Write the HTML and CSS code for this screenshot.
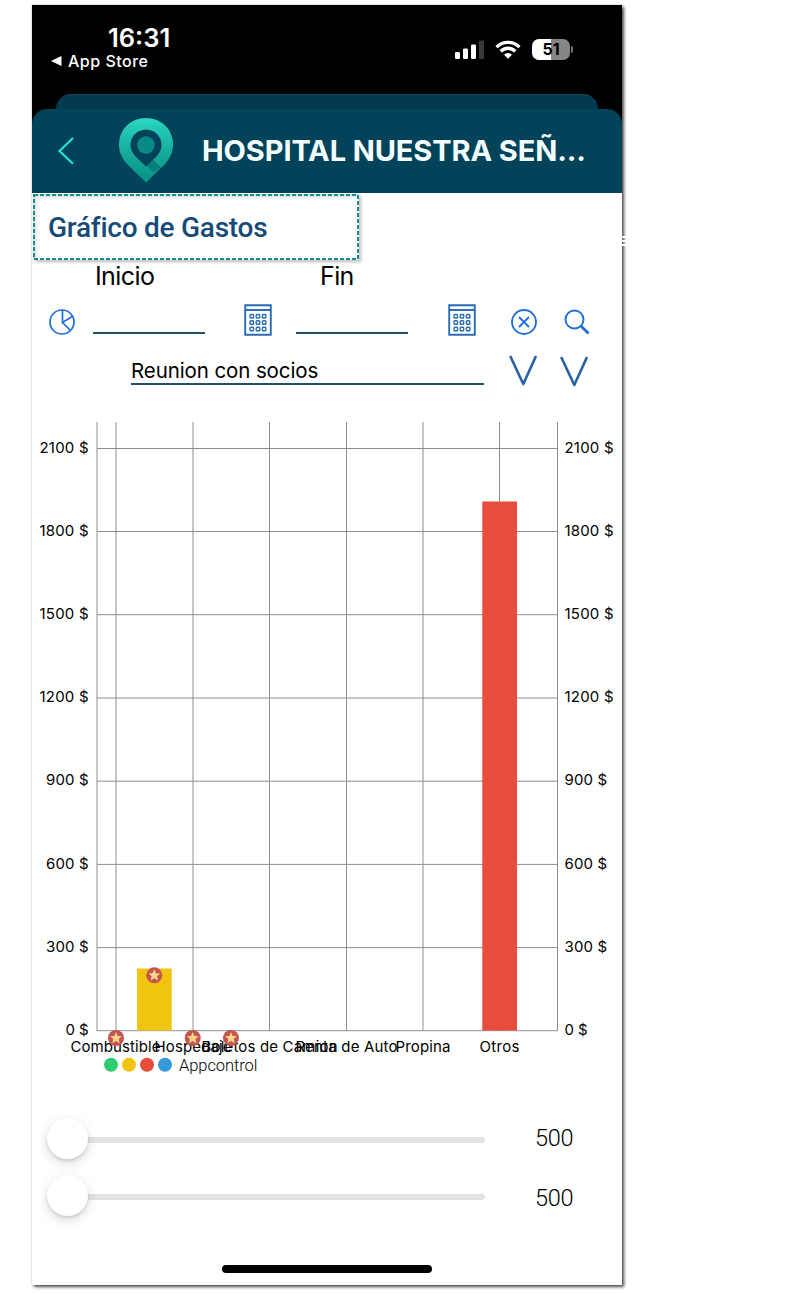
FILE: index.html
```html
<!DOCTYPE html>
<html lang="es">
<head>
<meta charset="utf-8">
<title>Gráfico de Gastos</title>
<link rel="stylesheet" href="styles.css">
</head>
<body>
<main class="phone">
  <div class="edge-menu"><i></i><i></i><i></i></div>
  <header class="top">
    <div class="status">
      <div class="clock">
        <div class="time">16:31</div>
        <div class="back-app"><svg width="11" height="10" viewBox="0 0 11 10"><path d="M0 5 10.5 0V10Z" fill="#fff"/></svg><span>App Store</span></div>
      </div>
      <div class="indicators">
        <svg class="signal" width="29" height="19" viewBox="0 0 29 19"><g fill="#fff"><rect x="0" y="12" width="5" height="7" rx="1.3"/><rect x="8" y="8.500" width="5" height="10.500" rx="1.3"/><rect x="16" y="4.500" width="5" height="14.500" rx="1.3"/></g><rect x="24" y="0.500" width="5" height="18.500" rx="1.3" fill="#3a3a3a"/></svg>
        <svg class="wifi" width="26" height="19" viewBox="0 0 26 19" fill="none" stroke="#fff" stroke-width="3.300"><path d="M1.500 7.100a16.300 16.300 0 0 1 23 0"/><path d="M5.700 11.300a10.300 10.300 0 0 1 14.600 0"/><path d="M9 14.700a5.700 5.700 0 0 1 8 0L13 18.700Z" fill="#fff" stroke="none"/></svg>
        <div class="battery">51</div><i class="battery-tip"></i>
      </div>
    </div>
    <div class="sheet-behind"></div>
    <div class="navbar">
      <svg class="back" width="17" height="28" viewBox="0 0 17 28"><path d="M16 1 2.500 14 16 26.800" fill="none" stroke="#20e2d2" stroke-width="2.200"/></svg>
      <svg class="logo" width="56" height="66" viewBox="0 0 56 66">
        <defs><linearGradient id="pin" x1="0" y1="0" x2="0" y2="1"><stop offset="0" stop-color="#29d8c0"/><stop offset=".5" stop-color="#18ad9f"/><stop offset="1" stop-color="#079087"/></linearGradient></defs>
        <path d="M28 1C12.500 1 1 12.500 1 27.500 1 36 4.500 42 10 48L28 65.500 46 48C51.500 42 55 36 55 27.500 55 12.500 43.500 1 28 1Z" fill="url(#pin)"/>
        <path d="M28 48 35.500 55.500 43 50.500 32 40Z" fill="#087e7b"/>
        <path d="M28 12.500A15.500 15.500 0 0 0 17 39L28 49.500 39 39A15.500 15.500 0 0 0 28 12.500Z" fill="#02435a"/>
        <circle cx="28" cy="28" r="8.700" fill="#078b86"/>
      </svg>
      <h1>HOSPITAL NUESTRA SEÑ...</h1>
    </div>
  </header>

  <section class="title-box">
    <svg class="dashes" width="326" height="66" viewBox="0 0 326 66"><rect x="1" y="1" width="324" height="64" fill="none" stroke="#168f91" stroke-width="2" stroke-dasharray="4 2"/></svg>
    <h2>Gráfico de Gastos</h2>
  </section>

  <section class="filters">
    <div class="labels"><span class="from">Inicio</span><span>Fin</span></div>
    <div class="dates">
      <svg class="pie" width="26" height="26" viewBox="0 0 26 26" fill="none" stroke="#1c6fdc" stroke-width="1.700"><circle cx="13" cy="13" r="12"/><path d="M13.500 1V13.500L24 7M13.500 13.500 21.500 21.500"/></svg>
      <i class="field"></i>
      <svg class="calendar" width="28" height="32" viewBox="0 0 28 32"><use href="#cal"/></svg>
      <i class="field"></i>
      <svg class="calendar second" width="28" height="32" viewBox="0 0 28 32"><g id="cal" fill="none" stroke="#2b6cb5" stroke-width="1.900"><path d="M1.200 1.200H26.800V30.800H1.200ZM1 6H27"/><g stroke-width="1.400"><rect x="6" y="10.500" width="3.500" height="3.500" rx=".8"/><rect x="12.200" y="10.500" width="3.500" height="3.500" rx=".8"/><rect x="18.400" y="10.500" width="3.500" height="3.500" rx=".8"/><rect x="6" y="16.800" width="3.500" height="3.500" rx=".8"/><rect x="12.200" y="16.800" width="3.500" height="3.500" rx=".8"/><rect x="18.400" y="16.800" width="3.500" height="3.500" rx=".8"/><rect x="6" y="23.300" width="3.500" height="3.500" rx=".8"/><rect x="12.200" y="23.300" width="3.500" height="3.500" rx=".8"/><rect x="18.400" y="23.300" width="3.500" height="3.500" rx=".8"/></g></g></svg>
      <svg class="clear" width="26" height="26" viewBox="0 0 26 26" fill="none" stroke="#1c6fdc" stroke-width="1.800"><circle cx="13" cy="13" r="12"/><path d="M8 8 18 18M18 8 8 18"/></svg>
      <svg class="search" width="26" height="26" viewBox="0 0 26 26" fill="none" stroke="#1c6fdc"><circle cx="10.500" cy="10.500" r="9" stroke-width="1.900"/><path d="M17 17 24.500 24.500" stroke-width="2.900"/></svg>
    </div>
    <div class="picker">
      <div class="choice">Reunion con socios</div>
      <svg class="chev" width="28" height="31" viewBox="0 0 28 31"><path d="M1.200 1 14.300 29 27 1" fill="none" stroke="#2862a5" stroke-width="2.600" stroke-linejoin="round"/></svg>
      <svg class="chev low" width="28" height="31" viewBox="0 0 28 31"><path d="M1.200 1 14.300 29 27 1" fill="none" stroke="#2862a5" stroke-width="2.600" stroke-linejoin="round"/></svg>
    </div>
  </section>

  <svg class="chart" width="590" height="690" viewBox="32 400 590 690">
    <defs>
      <g id="star"><circle r="8" fill="#c35650"/><path d="M0-6 1.700-2.100 5.900-1.800 2.700 1 3.700 5.200 0 2.900-3.700 5.200-2.700 1-5.900-1.800-1.700-2.100Z" fill="#fad689"/></g>
    </defs>
    <g class="grid">
      <path d="M97 448.500H557M97 531.500H557M97 614.700H557M97 698H557M97 781.200H557M97 864.400H557M97 947.600H557M97 1030.700H557"/>
      <path d="M97 422V1031M116 422V1031M193 422V1031M269.500 422V1031M346.500 422V1031M423 422V1031M499.500 422V1031M557.500 422V1031"/>
    </g>
    <rect x="137" y="968.500" width="34.700" height="62" fill="#f1c40f"/>
    <rect x="482.300" y="501.500" width="34.700" height="529" fill="#e74c3c"/>
    <g class="axis left">
      <text x="39.500" y="452.500" textLength="49">2100 $</text><text x="39.500" y="535.800" textLength="49">1800 $</text><text x="39.500" y="619" textLength="49">1500 $</text><text x="39.500" y="702.200" textLength="49">1200 $</text><text x="46" y="785.400" textLength="42.500">900 $</text><text x="46" y="868.600" textLength="42.500">600 $</text><text x="46" y="951.800" textLength="42.500">300 $</text><text x="65.500" y="1035" textLength="23">0 $</text>
    </g>
    <g class="axis right">
      <text x="564.500" y="452.500" textLength="49">2100 $</text><text x="564.500" y="535.800" textLength="49">1800 $</text><text x="564.500" y="619" textLength="49">1500 $</text><text x="564.500" y="702.200" textLength="49">1200 $</text><text x="564.500" y="785.400" textLength="42.500">900 $</text><text x="564.500" y="868.600" textLength="42.500">600 $</text><text x="564.500" y="951.800" textLength="42.500">300 $</text><text x="564.500" y="1035" textLength="23">0 $</text>
    </g>
    <g class="axis">
      <text x="70.500" y="1051.500" textLength="90">Combustible</text><text x="154.500" y="1051.500" textLength="77">Hospedaje</text><text x="201.500" y="1051.500" textLength="136">Boletos de Camion</text><text x="295.500" y="1051.500" textLength="102">Renta de Auto</text><text x="395.500" y="1051.500" textLength="55">Propina</text><text x="479.500" y="1051.500" textLength="40">Otros</text>
    </g>
    <use href="#star" x="116" y="1038"/><use href="#star" x="154.300" y="975.300"/><use href="#star" x="192.700" y="1038"/><use href="#star" x="231" y="1038"/>
    <circle cx="111" cy="1064.800" r="7" fill="#2ecc71"/><circle cx="129" cy="1064.800" r="7" fill="#f1c40f"/><circle cx="147" cy="1064.800" r="7" fill="#e74c3c"/><circle cx="165" cy="1064.800" r="7" fill="#3498db"/>
    <text class="legend" x="179" y="1071" textLength="78.500">Appcontrol</text>
  </svg>

  <section class="sliders">
    <div class="slider"><i class="knob"></i><i class="track"></i><span>500</span></div>
    <div class="slider second"><i class="knob"></i><i class="track"></i><span>500</span></div>
  </section>
  <div class="home"></div>
</main>
</body>
</html>
```
FILE: styles.css
```css
* { box-sizing: border-box; }
body { min-height: 1294px; margin: 0; padding: 5px 0 0 32px; background: #fff; font-family: Inter, "Liberation Sans", sans-serif; color: #000; }
svg, i { display: block; flex: none; }
h1, h2 { margin: 0; }
.phone { position: relative; width: 590px; height: 1280px; background: #fff; box-shadow: 2px 2px 3px rgba(0, 0, 0, .7), 0 0 2px rgba(0, 0, 0, .2); }
.edge-menu { position: absolute; left: 590px; top: 231px; width: 5px; display: grid; gap: 2px; }
.edge-menu i { height: 2px; background: #fff; }

.top { height: 188px; background: #000; }
.status { display: flex; justify-content: space-between; height: 89px; padding: 19px 49px 0 19px; color: #fff; }
.time { padding-left: 57px; font-size: 25.5px; line-height: 28px; font-weight: 600; }
.back-app { display: flex; align-items: center; gap: 6px; height: 18px; font-size: 16px; line-height: 18px; font-weight: 500; letter-spacing: .5px; }
.indicators { display: flex; align-items: center; height: 51px; }
.signal { margin-right: -1px; }
.wifi { margin-left: 12px; }
.battery { width: 38px; height: 21px; margin-left: 11px; border-radius: 7px; background: linear-gradient(90deg, #fff 51%, #858585 51%); color: #000; font-size: 16px; line-height: 21px; font-weight: 700; text-align: center; }
.battery-tip { width: 2px; height: 7px; margin-left: 1px; border-radius: 0 2px 2px 0; background: #777; }
.sheet-behind { height: 15px; margin: 0 24px; border-top: 1px solid #17495a; border-radius: 15px 15px 0 0; background: #023b4f; }
.navbar { display: flex; align-items: center; height: 84px; padding-left: 25px; border-radius: 15px 15px 0 0; background: #02435a; }
.logo { margin: 0 0 2px 44px; }
.navbar h1 { margin: 0 0 2px 28px; color: #f4feff; font-size: 29px; font-weight: 650; letter-spacing: -.1px; white-space: nowrap; }

.title-box { position: relative; width: 326px; height: 66px; margin: 1px 0 0 1px; padding: 16px 15px 0; box-shadow: 2px 2px 3px rgba(0, 0, 0, .25), inset 2px 2px 4px rgba(0, 0, 0, .2); }
.dashes { position: absolute; left: 0; top: 0; }
.title-box h2 { color: #164b78; font-family: Roboto, sans-serif; font-size: 28px; line-height: 36px; font-weight: 500; letter-spacing: -.25px; white-space: nowrap; }

.labels { display: flex; height: 33px; padding-left: 63px; font-size: 25px; line-height: 33px; letter-spacing: -.6px; }
.labels .from { width: 225px; }
.dates { display: flex; align-items: flex-end; height: 44px; padding: 0 0 1px 17px; }
.pie { margin-bottom: 1px; }
.field { width: 112px; height: 2px; margin: 0 39px 2px 18px; background: #24516a; }
.field + .calendar + .field { margin-left: 24px; }
.calendar.second { margin-left: 1px; }
.clear { margin: 0 0 1px 35px; }
.search { margin: 0 0 1px 27px; }
.picker { display: flex; height: 63px; padding: 17px 0 0 99px; }
.choice { width: 353px; height: 31px; border-bottom: 2px solid #24516a; font-size: 20.500px; line-height: 34px; letter-spacing: -.1px; }
.chev { margin: 1px 0 0 25px; }
.chev.low { margin: 2px 0 0 23px; }

.grid path { fill: none; stroke: #8e8e8e; stroke-width: 1; }
.axis text { font: 15px Inter, sans-serif; }
.legend { font: 300 16.500px Roboto, sans-serif; }

.sliders { padding: 27px 0 0 15px; }
.slider { display: flex; align-items: center; height: 42px; }
.slider.second { margin-top: 15px; }
.knob { position: relative; width: 41px; height: 41px; border-radius: 50%; background: #fff; box-shadow: 0 4px 12px rgba(0, 0, 0, .15), 0 2px 3px rgba(0, 0, 0, .1); }
.track { width: 397px; height: 6px; margin-top: 3px; border-radius: 0 3px 3px 0; background: #e3e3e3; }
.slider span { margin: 0 0 1px 50px; font: 300 23.500px Roboto, sans-serif; letter-spacing: -.3px; }
.slider.second span { margin-bottom: -5px; }
.home { width: 210px; height: 8px; margin: 49px 0 0 190px; border-radius: 4px; background: #000; }
```
